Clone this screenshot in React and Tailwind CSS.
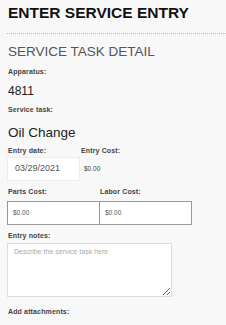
export default function App() {
  const label = "block text-[7px] font-bold text-[#444] tracking-[0.02em] leading-none";
  return (
    <div className="min-h-[325px] w-[226px] bg-[#f8f8f8] font-['Liberation_Sans',Arial,sans-serif] text-[#222] overflow-hidden">
      <div className="pl-[8px] pt-[3px]">
        <h1 className="text-[15.5px] font-bold leading-[20px] text-[#111]">ENTER SERVICE ENTRY</h1>
      </div>
      <div className="ml-[7px] mt-[10px] border-t border-dotted border-[#bbb]" />
      <div className="pl-[8px]">
        <h2 className="mt-[10px] text-[13.5px] leading-[16px] text-[#555]">SERVICE TASK DETAIL</h2>

        <span className={label + " mt-[8px]"}>Apparatus:</span>
        <div className="mt-[10px] text-[12px] leading-[13px] text-[#222]">4811</div>

        <span className={label + " mt-[8px]"}>Service task:</span>
        <div className="mt-[13px] text-[13.5px] leading-[14px] text-[#222]">Oil Change</div>

        <div className="mt-[7px] flex">
          <div className="w-[73px]">
            <span className={label}>Entry date:</span>
            <div className="mt-[3px] -ml-[1px] h-[24px] w-[73px] bg-white border border-[#eee] flex items-center pl-[7px] text-[9px] text-[#555]">
              03/29/2021
            </div>
          </div>
          <div>
            <span className={label}>Entry Cost:</span>
            <div className="mt-[3px] h-[24px] flex items-center pl-[3px] text-[6.5px] text-[#444]">$0.00</div>
          </div>
        </div>

        <div className="mt-[7px] flex -ml-[1px]">
          <div className="w-[92px]">
            <span className={label + " ml-[1px]"}>Parts Cost:</span>
            <div className="mt-[6px] h-[24px] w-[93px] bg-white border border-[#999] flex items-center pl-[5px] text-[6.5px] text-[#555]">
              $0.00
            </div>
          </div>
          <div>
            <span className={label + " ml-[1px]"}>Labor Cost:</span>
            <div className="mt-[6px] h-[24px] w-[93px] bg-white border border-[#999] flex items-center pl-[5px] text-[6.5px] text-[#555]">
              $0.00
            </div>
          </div>
        </div>

        <span className={label + " mt-[7px]"}>Entry notes:</span>
        <textarea
          className="mt-[4px] -ml-[1px] block h-[54px] w-[165px] bg-white border border-[#ddd] px-[6px] py-[3px] text-[7px] leading-[9px] text-[#444] placeholder:text-[#aaa] outline-none"
          placeholder="Describe the service task here"
        />

        <span className={label + " mt-[11px]"}>Add attachments:</span>
      </div>
    </div>
  );
}
